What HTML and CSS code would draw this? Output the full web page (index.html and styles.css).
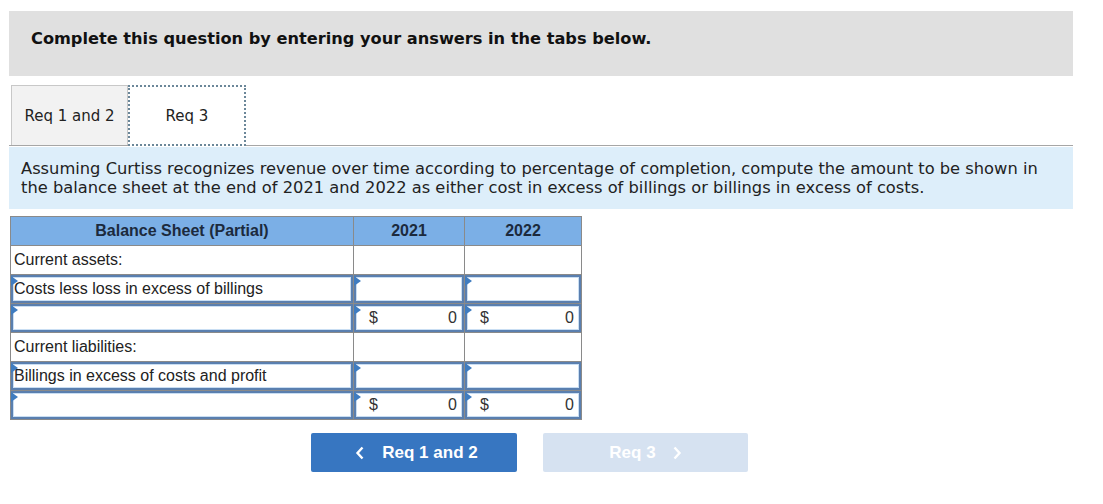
FILE: index.html
```html
<!DOCTYPE html>
<html>
<head>
<meta charset="utf-8">
<link rel="stylesheet" href="styles.css">
</head>
<body>
<div class="page">
  <div class="banner">Complete this question by entering your answers in the tabs below.</div>
  <div class="tabs">
    <div class="tab tab-inactive">Req 1 and 2</div>
    <div class="tab tab-active">Req 3</div>
  </div>
  <div class="info">Assuming Curtiss recognizes revenue over time according to percentage of completion, compute the amount to be shown in the balance sheet at the end of 2021 and 2022 as either cost in excess of billings or billings in excess of costs.</div>
  <table class="sheet">
    <colgroup><col class="c1"><col class="c2"><col class="c3"></colgroup>
    <tr class="head"><th>Balance Sheet (Partial)</th><th>2021</th><th>2022</th></tr>
    <tr><td class="plain">Current assets:</td><td></td><td></td></tr>
    <tr>
      <td class="in"><div class="box"><span class="mark"></span>Costs less loss in excess of billings</div></td>
      <td class="in"><div class="box"><span class="mark"></span></div></td>
      <td class="in"><div class="box"><span class="mark"></span></div></td>
    </tr>
    <tr>
      <td class="in"><div class="box"><span class="mark"></span></div></td>
      <td class="in"><div class="box money"><span class="mark"></span><span class="dol">$</span><span class="val">0</span></div></td>
      <td class="in"><div class="box money"><span class="mark"></span><span class="dol">$</span><span class="val">0</span></div></td>
    </tr>
    <tr><td class="plain">Current liabilities:</td><td></td><td></td></tr>
    <tr>
      <td class="in"><div class="box"><span class="mark"></span>Billings in excess of costs and profit</div></td>
      <td class="in"><div class="box"><span class="mark"></span></div></td>
      <td class="in"><div class="box"><span class="mark"></span></div></td>
    </tr>
    <tr>
      <td class="in"><div class="box"><span class="mark"></span></div></td>
      <td class="in"><div class="box money"><span class="mark"></span><span class="dol">$</span><span class="val">0</span></div></td>
      <td class="in"><div class="box money"><span class="mark"></span><span class="dol">$</span><span class="val">0</span></div></td>
    </tr>
  </table>
  <div class="nav">
    <div class="btn btn-prev">
      <svg class="chev" width="10" height="14" viewBox="0 0 10 14"><path d="M7.5 1.5 L2.5 7 L7.5 12.5" fill="none" stroke="#ffffff" stroke-width="2.4"/></svg>
      <span>Req 1 and 2</span>
    </div>
    <div class="btn btn-next">
      <span>Req 3</span>
      <svg class="chev" width="10" height="14" viewBox="0 0 10 14"><path d="M2.5 1.5 L7.5 7 L2.5 12.5" fill="none" stroke="#ffffff" stroke-width="2.4"/></svg>
    </div>
  </div>
</div>
</body>
</html>
```
FILE: styles.css
```css
html, body { margin: 0; padding: 0; background: #ffffff; }
.page { width: 1064px; padding: 11px 0 0 9px; font-family: "DejaVu Sans", Verdana, sans-serif; color: #1b1b1b; }
.banner { background: #e0e0e0; height: 65px; box-sizing: border-box; padding: 18px 0 0 22px; font-weight: bold; font-size: 16.2px; color: #111; }
.tabs { display: flex; margin-top: 9px; padding-left: 2px; border-bottom: 1px solid #a6a6a6; height: 60px; }
.tab { box-sizing: border-box; height: 60px; display: flex; align-items: center; justify-content: center; font-size: 15px; color: #222; }
.tab-inactive { width: 117px; background: #f2f2f2; border: 1px solid #c8c8c8; border-bottom: none; }
.tab-active { width: 118px; background: #fff; border: 2px dotted #6b8799; margin-bottom: -1px; height: 61px; }
.info { background: #ddeefa; margin-top: 1px; height: 62px; box-sizing: border-box; padding: 12px 12px 0 12px; font-size: 16.3px; line-height: 19px; color: #222; }
.sheet { margin: 7px 0 0 1px; border-collapse: collapse; table-layout: fixed; width: 571px; font-family: "Liberation Sans", Arial, sans-serif; font-size: 16px; }
.c1 { width: 343px; } .c2 { width: 111px; } .c3 { width: 117px; }
.sheet td, .sheet th { border: 1px solid #8a8a8a; height: 29px; padding: 0; box-sizing: border-box; }
.head th { background: #7bafe6; font-weight: bold; font-size: 16px; color: #1c2a3d; text-align: center; height: 29px; }
.plain { padding-left: 3px !important; color: #222; }
.in { padding: 0 !important; position: relative; }
.box { position: relative; height: 28px; box-sizing: border-box; border: 2px solid #5a7faf; box-shadow: inset 0 0 0 1px #c9def3; padding: 0 0 0 1px; display: flex; align-items: center; color: #222; white-space: nowrap; }
.mark { position: absolute; left: -2px; top: -1px; width: 0; height: 0; border-top: 5px solid transparent; border-bottom: 5px solid transparent; border-left: 7px solid #3f7cc0; }
.money { justify-content: space-between; padding: 0 5px 0 13px; }
.dol { color: #333; }
.val { color: #333; }
.nav { display: flex; gap: 26px; margin: 13px 0 0 302px; }
.btn { width: 206px; height: 39px; box-sizing: border-box; border-radius: 2px; display: flex; align-items: center; justify-content: center; gap: 17px; font-family: "Liberation Sans", Arial, sans-serif; font-weight: bold; font-size: 17px; color: #fff; }
.btn-prev { background: #3776c1; padding-left: 5px; }
.btn-next { background: #d6e2f1; width: 205px; gap: 16px; }
.chev { display: block; }
```
